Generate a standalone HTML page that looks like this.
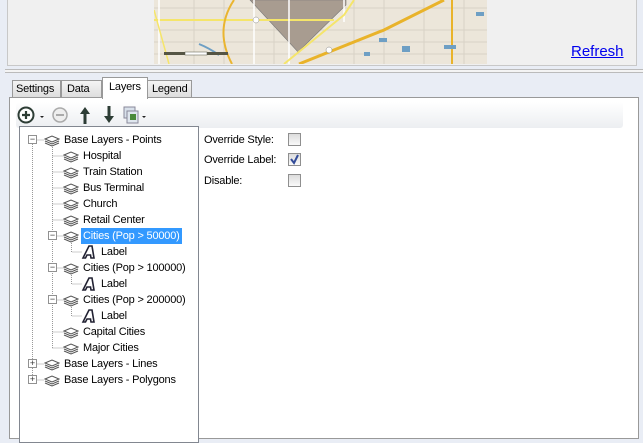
<!DOCTYPE html>
<html><head><style>
body{margin:0;width:643px;height:432px;background:#e9edf5;font-family:"Liberation Sans",sans-serif;font-size:11px;letter-spacing:-0.2px;position:relative;overflow:hidden}
.a{position:absolute}
.t{position:absolute;white-space:nowrap;line-height:14px}
.cb{position:absolute;width:11px;height:11px;border:1px solid #8f8f8f;background:linear-gradient(#dcdcdc,#fafafa)}
.ex{position:absolute;width:7px;height:7px;border:1px solid #919191;background:#fff;font-size:9px;line-height:7px;text-align:center;color:#333;letter-spacing:0}
</style></head><body>
<div class="a" style="left:7px;top:-2px;width:628px;height:66px;background:#f0f0f0;border:1px solid #c8c8c8"></div>
<svg class="a" style="left:154px;top:0" width="333" height="64" viewBox="0 0 333 64" preserveAspectRatio="none">
<rect width="333" height="64" fill="#ece6da"/>
<g stroke="#d8d2c6" stroke-width="1">
<path d="M0 8H333M0 30H333M0 42H333M0 54H333M40 0V64M70 0V64M120 0V64M200 0V64M230 0V64M270 0V64M310 0V64"/></g>
<polygon points="96,0 192,0 192,5 144,52" fill="#a89c90" stroke="#777" stroke-width="0.6"/>
<path d="M0 20H180" stroke="#f5e56a" stroke-width="2" fill="none"/>
<path d="M5 0V64M100 0V64M135 0V64M190 0V22" stroke="#fff" stroke-width="1.5"/>
<path d="M80 0Q60 30 78 64" stroke="#eab530" stroke-width="2" fill="none"/>
<path d="M130 64L190 15L200 0" stroke="#f5e56a" stroke-width="2" fill="none"/>
<path d="M145 64L230 30L290 0" stroke="#e9b32a" stroke-width="3" fill="none"/>
<path d="M298 0V64" stroke="#e9b32a" stroke-width="2"/>
<path d="M0 10L15 64" stroke="#f5e56a" stroke-width="1.5" fill="none"/>
<g fill="#6e9fc4"><rect x="225" y="38" width="8" height="4"/><rect x="248" y="46" width="8" height="6"/><rect x="290" y="45" width="12" height="4"/><rect x="322" y="12" width="8" height="4"/><rect x="210" y="52" width="6" height="4"/></g>
<path d="M45 44Q55 48 65 55" stroke="#6e9fc4" stroke-width="2" fill="none"/>
<rect x="10" y="52" width="21" height="3" fill="#554"/><rect x="31" y="52" width="22" height="3" fill="#fff" stroke="#554" stroke-width=".5"/><rect x="53" y="52" width="21" height="3" fill="#554"/>
<circle cx="102" cy="20" r="3" fill="#fff" stroke="#888" stroke-width=".5"/><circle cx="175" cy="50" r="3" fill="#fff" stroke="#888" stroke-width=".5"/>
</svg>
<div class="t" style="left:571px;top:43px;font-size:15px;letter-spacing:0;color:#0000ee;text-decoration:underline;line-height:17px">Refresh</div>
<div class="a" style="left:5px;top:69px;width:638px;height:2px;border-top:1px solid #bbb;border-bottom:1px solid #bbb;background:#f4f4f4"></div>
<div class="a" style="left:12px;top:80px;width:47px;height:17px;border:1px solid #999;background:linear-gradient(#f4f4f4,#dcdcdc)"></div><div class="t" style="left:16px;top:82px">Settings</div>
<div class="a" style="left:61px;top:80px;width:39px;height:17px;border:1px solid #999;background:linear-gradient(#f4f4f4,#dcdcdc)"></div><div class="t" style="left:67px;top:82px">Data</div>
<div class="a" style="left:147px;top:80px;width:43px;height:17px;border:1px solid #999;background:linear-gradient(#f4f4f4,#dcdcdc)"></div><div class="t" style="left:152px;top:82px">Legend</div>
<div class="a" style="left:9px;top:97px;width:628px;height:340px;border:1px solid #999;background:#fff"></div>
<div class="a" style="left:102px;top:77px;width:44px;height:21px;border:1px solid #999;border-bottom:none;background:#fff;z-index:2"></div><div class="t" style="left:109px;top:80px;z-index:3">Layers</div>
<div class="a" style="left:16px;top:102px;width:607px;height:26px;background:linear-gradient(#fff,#eceef1);border-radius:3px"></div>
<svg class="a" style="left:16px;top:104px" width="140" height="22">
<circle cx="10" cy="11" r="7.5" fill="#fff" stroke="#2d3d35" stroke-width="2"/><path d="M6 11H14M10 7V15" stroke="#2d3d35" stroke-width="2.2"/>
<path d="M24 12h4l-2 2z" fill="#222"/>
<circle cx="44" cy="11" r="7" fill="#eee" stroke="#aaa" stroke-width="1.5"/><path d="M40 11H48" stroke="#aaa" stroke-width="2"/>
<path d="M69 20V8" stroke="#2d3d35" stroke-width="3"/><path d="M64 10l5-7 5 7z" fill="#2d3d35"/>
<path d="M93 2V14" stroke="#2d3d35" stroke-width="3"/><path d="M88 12l5 7 5-7z" fill="#2d3d35"/>
<rect x="108" y="3" width="11" height="11" fill="#d8e0ea" stroke="#889"/><rect x="111" y="7" width="11" height="12" fill="#dfe6ee" stroke="#889"/><rect x="114" y="10" width="6" height="6" fill="#4a8a3a"/>
<path d="M126 12h4l-2 2z" fill="#222"/>
</svg>
<div class="a" style="left:19px;top:126px;width:178px;height:315px;border:1px solid #828790;background:#fff"></div>
<svg class="a" style="left:20px;top:127px" width="176" height="300">
<g stroke="#999" stroke-width="1" stroke-dasharray="1,1" fill="none">
<path d="M12.5 13V253M12.5 237H24M12.5 253H24M12.5 13H24"/>
<path d="M32.5 20V221M32.5 29H44M32.5 45H44M32.5 61H44M32.5 77H44M32.5 93H44M32.5 109H44M32.5 141H44M32.5 173H44M32.5 205H44M32.5 221H44"/>
<path d="M51.5 116V125H62M51.5 148V157H62M51.5 180V189H62"/>
</g>
</svg>
<div class="ex" style="left:28px;top:135px">−</div>
<div class="ex" style="left:48px;top:231px">−</div>
<div class="ex" style="left:48px;top:263px">−</div>
<div class="ex" style="left:48px;top:295px">−</div>
<div class="ex" style="left:28px;top:359px">+</div>
<div class="ex" style="left:28px;top:375px">+</div>
<svg width="0" height="0" style="position:absolute"><defs><g id="L"><path d="M1 7L8 4L15 7L8 10Z" fill="#fff" stroke="#555"/><path d="M1 9L8 12L15 9M1 11L8 14L15 11" stroke="#555" fill="none"/></g>
<g id="A"><path d="M2 14L8 2H11L13 14H10L9.5 11H6L4.5 14Z" fill="#fff" stroke="#223" stroke-width="1.6"/></g></defs></svg>
<svg class="a" style="left:44px;top:132px" width="16" height="16"><use href="#L"/></svg><div class="t" style="left:64px;top:133px">Base Layers - Points</div>
<svg class="a" style="left:63px;top:148px" width="16" height="16"><use href="#L"/></svg><div class="t" style="left:83px;top:149px">Hospital</div>
<svg class="a" style="left:63px;top:164px" width="16" height="16"><use href="#L"/></svg><div class="t" style="left:83px;top:165px">Train Station</div>
<svg class="a" style="left:63px;top:180px" width="16" height="16"><use href="#L"/></svg><div class="t" style="left:83px;top:181px">Bus Terminal</div>
<svg class="a" style="left:63px;top:196px" width="16" height="16"><use href="#L"/></svg><div class="t" style="left:83px;top:197px">Church</div>
<svg class="a" style="left:63px;top:212px" width="16" height="16"><use href="#L"/></svg><div class="t" style="left:83px;top:213px">Retail Center</div>
<svg class="a" style="left:63px;top:228px" width="16" height="16"><use href="#L"/></svg><div class="t" style="left:81px;top:228px;background:#3399ff;color:#fff;padding:1px 2px">Cities (Pop &gt; 50000)</div>
<svg class="a" style="left:81px;top:244px" width="16" height="16"><use href="#A"/></svg><div class="t" style="left:101px;top:245px">Label</div>
<svg class="a" style="left:63px;top:260px" width="16" height="16"><use href="#L"/></svg><div class="t" style="left:83px;top:261px">Cities (Pop &gt; 100000)</div>
<svg class="a" style="left:81px;top:276px" width="16" height="16"><use href="#A"/></svg><div class="t" style="left:101px;top:277px">Label</div>
<svg class="a" style="left:63px;top:292px" width="16" height="16"><use href="#L"/></svg><div class="t" style="left:83px;top:293px">Cities (Pop &gt; 200000)</div>
<svg class="a" style="left:81px;top:308px" width="16" height="16"><use href="#A"/></svg><div class="t" style="left:101px;top:309px">Label</div>
<svg class="a" style="left:63px;top:324px" width="16" height="16"><use href="#L"/></svg><div class="t" style="left:83px;top:325px">Capital Cities</div>
<svg class="a" style="left:63px;top:340px" width="16" height="16"><use href="#L"/></svg><div class="t" style="left:83px;top:341px">Major Cities</div>
<svg class="a" style="left:44px;top:356px" width="16" height="16"><use href="#L"/></svg><div class="t" style="left:64px;top:357px">Base Layers - Lines</div>
<svg class="a" style="left:44px;top:372px" width="16" height="16"><use href="#L"/></svg><div class="t" style="left:64px;top:373px">Base Layers - Polygons</div>
<div class="t" style="left:204px;top:133px">Override Style:</div><div class="cb" style="left:288px;top:133px"></div>
<div class="t" style="left:204px;top:153px">Override Label:</div><div class="cb" style="left:288px;top:153px"></div>
<svg class="a" style="left:289px;top:154px" width="11" height="11"><path d="M2 5L5 9L9 1" stroke="#334c99" stroke-width="2" fill="none"/></svg>
<div class="t" style="left:204px;top:174px">Disable:</div><div class="cb" style="left:288px;top:174px"></div>
</body></html>
